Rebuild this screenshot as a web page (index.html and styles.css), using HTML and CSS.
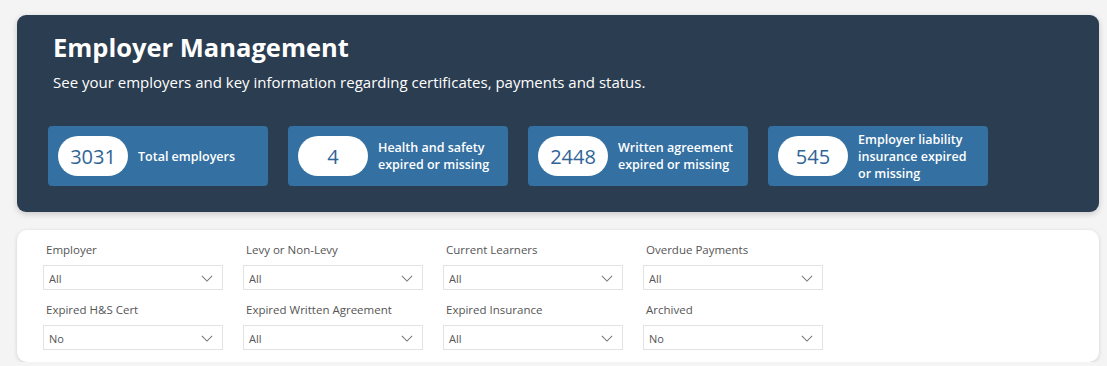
FILE: index.html
```
<!DOCTYPE html>
<html lang="en">
<head>
    <meta charset="UTF-8">
    <meta name="viewport" content="width=device-width, initial-scale=1.0">
    <title>Employer Management</title>
    <link rel="stylesheet" href="styles.css">
</head>
<body>
    <div class="page">
        <div class="header-card">
            <h1>Employer Management</h1>
            <p class="subtitle">See your employers and key information regarding certificates, payments and status.</p>

            <div class="stats">
                <div class="stat">
                    <span class="stat-value">3031</span>
                    <span class="stat-label">Total employers</span>
                </div>
                <div class="stat">
                    <span class="stat-value">4</span>
                    <span class="stat-label">Health and safety expired or missing</span>
                </div>
                <div class="stat">
                    <span class="stat-value">2448</span>
                    <span class="stat-label">Written agreement expired or missing</span>
                </div>
                <div class="stat">
                    <span class="stat-value">545</span>
                    <span class="stat-label">Employer liability insurance expired or missing</span>
                </div>
            </div>
        </div>

        <div class="filter-card">
            <div class="filter-grid">
                <div class="filter">
                    <label>Employer</label>
                    <div class="select"><span>All</span><svg viewBox="0 0 14 8"><path d="M1 1l6 6 6-6"/></svg></div>
                </div>
                <div class="filter">
                    <label>Levy or Non-Levy</label>
                    <div class="select"><span>All</span><svg viewBox="0 0 14 8"><path d="M1 1l6 6 6-6"/></svg></div>
                </div>
                <div class="filter">
                    <label>Current Learners</label>
                    <div class="select"><span>All</span><svg viewBox="0 0 14 8"><path d="M1 1l6 6 6-6"/></svg></div>
                </div>
                <div class="filter">
                    <label>Overdue Payments</label>
                    <div class="select"><span>All</span><svg viewBox="0 0 14 8"><path d="M1 1l6 6 6-6"/></svg></div>
                </div>
                <div class="filter">
                    <label>Expired H&amp;S Cert</label>
                    <div class="select"><span>No</span><svg viewBox="0 0 14 8"><path d="M1 1l6 6 6-6"/></svg></div>
                </div>
                <div class="filter">
                    <label>Expired Written Agreement</label>
                    <div class="select"><span>All</span><svg viewBox="0 0 14 8"><path d="M1 1l6 6 6-6"/></svg></div>
                </div>
                <div class="filter">
                    <label>Expired Insurance</label>
                    <div class="select"><span>All</span><svg viewBox="0 0 14 8"><path d="M1 1l6 6 6-6"/></svg></div>
                </div>
                <div class="filter">
                    <label>Archived</label>
                    <div class="select"><span>No</span><svg viewBox="0 0 14 8"><path d="M1 1l6 6 6-6"/></svg></div>
                </div>
            </div>
        </div>
    </div>
</body>
</html>
```

FILE: styles.css
```
* {
    margin: 0;
    padding: 0;
    box-sizing: border-box;
    font-family: "Open Sans", "Noto Sans", sans-serif;
}

body {
    background-color: #f4f4f4;
    overflow: hidden;
}

.page {
    padding: 15px 8px 0 17px;
    width: 1107px;
}

.header-card {
    width: 1082px;
    height: 197px;
    background: #2b3d50;
    border-radius: 9px;
    box-shadow: 0 2px 6px rgba(0, 0, 0, 0.18);
    padding: 16px 0 0 31px;
}

h1 {
    color: #fff;
    font-size: 25.5px;
    font-weight: 700;
    line-height: 32px;
    margin-left: 5px;
}

.subtitle {
    color: #fff;
    font-size: 15px;
    line-height: 20px;
    margin: 9px 0 0 5px;
}

.stats {
    display: flex;
    gap: 20px;
    margin-top: 34px;
}

.stat {
    width: 220px;
    height: 60px;
    background: #3470a2;
    border-radius: 4px;
    display: flex;
    align-items: center;
    padding-left: 10px;
}

.stat-value {
    flex: none;
    width: 70px;
    height: 40px;
    border-radius: 20px;
    background: #fff;
    color: #2f6496;
    font-size: 20px;
    display: flex;
    align-items: center;
    justify-content: center;
}

.stat-label {
    color: #fff;
    font-size: 12.5px;
    font-weight: 600;
    line-height: 17px;
    margin-left: 10px;
    padding-right: 14px;
}

.filter-card {
    width: 1082px;
    height: 132px;
    margin-top: 18px;
    background: #fff;
    border-radius: 10px;
    box-shadow: 0 1px 4px rgba(0, 0, 0, 0.14);
    padding: 12px 0 0 26px;
}

.filter-grid {
    display: grid;
    grid-template-columns: repeat(4, 180px);
    column-gap: 20px;
    row-gap: 12px;
}

.filter label {
    display: block;
    color: #555;
    font-size: 11.5px;
    line-height: 16px;
    margin: 0 0 7px 3px;
}

.select {
    height: 25px;
    border: 1px solid #e3e3e3;
    display: flex;
    align-items: center;
    justify-content: space-between;
    padding: 2px 9px 0 5px;
    color: #555;
    font-size: 11px;
}

.select svg {
    width: 12px;
    height: 7px;
    fill: none;
    stroke: #777;
    stroke-width: 1.2;
}
```
